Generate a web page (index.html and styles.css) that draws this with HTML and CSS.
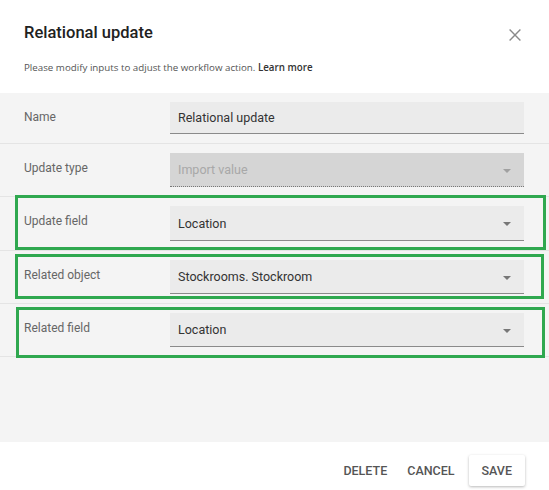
FILE: index.html
```html
<!DOCTYPE html>
<html lang="en">
<head>
<meta charset="utf-8">
<title>Relational update</title>
<link rel="stylesheet" href="styles.css">
</head>
<body>
<div class="dialog">
  <div class="header">
    <h1 class="title">Relational update</h1>
    <button class="close" aria-label="Close">
      <svg width="12" height="12" viewBox="0 0 12 12"><path d="M0.6 0.6 L11.4 11.4 M11.4 0.6 L0.6 11.4" stroke="#8a8a8a" stroke-width="1.4" fill="none"/></svg>
    </button>
  </div>
  <p class="subtitle">Please modify inputs to adjust the workflow action. <b>Learn more</b></p>

  <div class="content">
    <div class="row row-name">
      <div class="label">Name</div>
      <div class="field input">Relational update</div>
    </div>
    <div class="row row-type">
      <div class="label">Update type</div>
      <div class="field select disabled"><span>Import value</span><i class="arrow"></i></div>
    </div>
    <div class="row row-tall">
      <div class="label">Update field</div>
      <div class="field select"><span>Location</span><i class="arrow"></i></div>
      <div class="highlight hl-1"></div>
    </div>
    <div class="row">
      <div class="label">Related object</div>
      <div class="field select"><span>Stockrooms. Stockroom</span><i class="arrow"></i></div>
      <div class="highlight hl-2"></div>
    </div>
    <div class="row">
      <div class="label">Related field</div>
      <div class="field select"><span>Location</span><i class="arrow"></i></div>
      <div class="highlight hl-3"></div>
    </div>
  </div>

  <div class="footer">
    <button class="btn text">DELETE</button>
    <button class="btn text">CANCEL</button>
    <button class="btn raised">SAVE</button>
  </div>
</div>
</body>
</html>
```

FILE: styles.css
```css
* { box-sizing: border-box; }

html, body {
  margin: 0;
  padding: 0;
  background: #ffffff;
}

body {
  font-family: Roboto, "Liberation Sans", sans-serif;
  color: #333;
  width: 549px;
  height: 490px;
  overflow: hidden;
}

.dialog {
  display: flex;
  flex-direction: column;
  height: 490px;
}

.header {
  display: flex;
  justify-content: space-between;
  align-items: flex-start;
  padding: 23px 28px 0 24px;
}

.title {
  margin: 0;
  font-size: 16.5px;
  line-height: 20px;
  font-weight: 500;
  color: #212121;
}

.close {
  margin: 6px 0 0 0;
  padding: 0;
  border: 0;
  background: none;
  width: 12px;
  height: 12px;
  display: block;
}
.close svg { display: block; }

.subtitle {
  margin: 18px 0 0 24px;
  font-family: "Open Sans", "Liberation Sans", sans-serif;
  font-size: 9.75px;
  line-height: 14px;
  color: #555;
  height: 14px;
}
.subtitle b {
  font-weight: 600;
  color: #333;
}

.content {
  margin-top: 18px;
  background: #f4f4f4;
  height: 349px;
}

.row {
  position: relative;
  display: flex;
  align-items: flex-start;
  padding: 9px 25px 9px 24px;
  border-bottom: 1px solid #e4e4e4;
}

.label {
  width: 146px;
  flex: none;
  padding-top: 7px;
  font-size: 12px;
  line-height: 16px;
  color: #666;
}

.field {
  flex: 1;
  display: flex;
  align-items: center;
  justify-content: space-between;
  padding: 0 13px 0 8px;
  background: #ebebeb;
  border-bottom: 1px solid #8a8a8a;
  font-size: 12.5px;
  color: #333;
  height: 34px;
}

.input { height: 32px; }
.row-tall .field { height: 35px; }

.select.disabled {
  background: #d5d5d5;
  color: #a8a8a8;
  border-bottom: 1px dotted #777;
}

.arrow {
  width: 0;
  height: 0;
  border-left: 4px solid transparent;
  border-right: 4px solid transparent;
  border-top: 4px solid #777;
  margin-top: 2px;
}
.disabled .arrow { border-top-color: #a0a0a0; }

.highlight {
  position: absolute;
  border: 3px solid #2fa84f;
  pointer-events: none;
}
.hl-1 { left: 15px; top: -2px; width: 531px; height: 55px; }
.hl-2 { left: 15px; top: 3px; width: 529px; height: 45px; }
.hl-3 { left: 16px; top: 3px; width: 529px; height: 51px; }

.footer {
  display: flex;
  justify-content: flex-end;
  align-items: center;
  padding: 13px 24px 0 0;
}

.btn {
  font-family: Roboto, "Liberation Sans", sans-serif;
  font-size: 12.5px;
  font-weight: 500;
  color: #555;
  background: none;
  border: 0;
  height: 31px;
  padding: 0 10px;
  line-height: 31px;
}

.btn.raised {
  margin-left: 4px;
  padding: 0 13px;
  background: #fff;
  border-radius: 2px;
  box-shadow: 0 1px 3px rgba(0, 0, 0, 0.28);
}
```
